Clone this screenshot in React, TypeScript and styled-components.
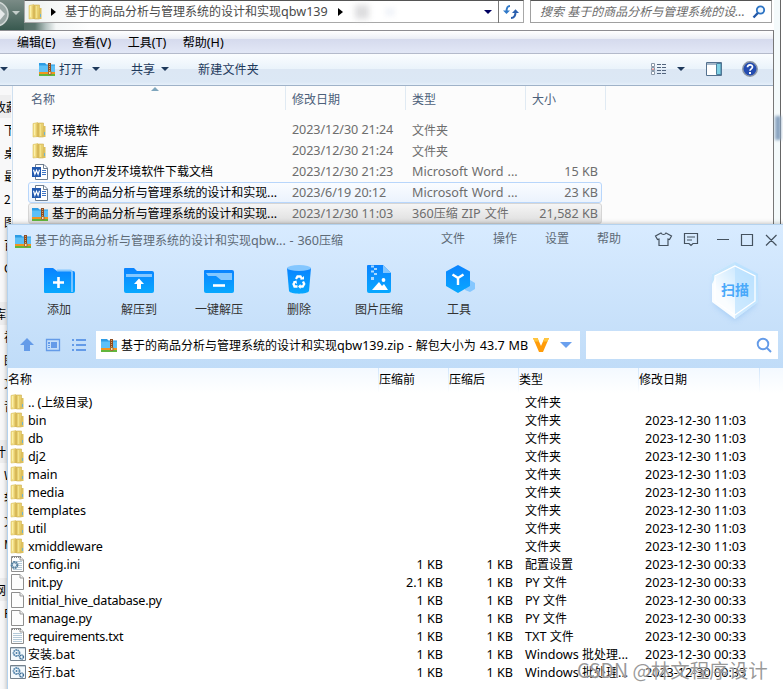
import React from "react";
import styled, { createGlobalStyle } from "styled-components";

const Global = createGlobalStyle`
  * { box-sizing: border-box; }
  body { margin: 0; overflow: hidden; background: #fff; }
`;

const Desktop = styled.div`
  position: relative;
  width: 783px;
  height: 689px;
  overflow: hidden;
  background: #fff;
  color: #000;
  font: 12px/16px "Noto Sans CJK SC", "Noto Sans", sans-serif;
  white-space: nowrap;
`;

const Latin = styled.span`
  font-family: "Noto Sans", sans-serif;
  font-size: 1.05em;
`;
const Run = styled.span<{ $track?: number; $words?: number }>`
  display: inline-block;
  white-space: pre;
  letter-spacing: ${(p) => p.$track ?? 0}px;
  word-spacing: ${(p) => p.$words ?? 0}px;
`;

/* Mixed text: Latin runs are set slightly larger than the Chinese ones. */
const Txt = ({ s, track, words }: { s: string; track?: number; words?: number }) => (
  <Run $track={track} $words={words}>
    {s.split(/([\u2e80-\uffef]+)/).map((p, i) =>
      i % 2 ? p : p ? <Latin key={i}>{p}</Latin> : null
    )}
  </Run>
);

/* ---------- Explorer window ---------- */

const Explorer = styled.section`
  position: absolute;
  inset: 0;
  display: flex;
  flex-direction: column;
`;

const AddressBar = styled.header`
  display: flex;
  height: 30px;
  align-items: flex-start;
  background: linear-gradient(90deg, #435f57 0, #5d776f 35px, #b6c4c2 46px, #f4f7f7 56px, #fff 90px);
`;
const NavButton = styled.div`
  width: 24px;
  height: 30px;
  overflow: hidden;
  background: linear-gradient(#7a8b86, #38594f);
  svg { display: block; }
`;
const PathField = styled.div`
  display: flex;
  align-items: center;
  width: 500px;
  height: 23px;
  padding-left: 3px;
  border: 1px solid #a8a8a8;
  border-top: 1px solid #555;
  background: linear-gradient(90deg, #edf1f0 0, #fff 60px);
  color: #4a4a4a;
`;
const PathArrow = styled.i<{ $gap: number }>`
  border: 4px solid transparent;
  border-left: 5px solid #000;
  border-right: 0;
  margin: 0 9px 0 ${(p) => p.$gap}px;
`;
const Blurred = styled.div`
  display: flex;
  gap: 9px;
  margin-left: 3px;
  filter: blur(3px);
  i { width: 14px; height: 14px; background: #dcdcde; }
  i + i { width: 8px; height: 6px; margin: 4px 0 0 8px; background: #e6ebf4; }
`;
const DownArrow = styled.i<{ $c: string; $w?: number }>`
  border: ${(p) => p.$w ?? 4}px solid transparent;
  border-top-color: ${(p) => p.$c};
  border-bottom: 0;
`;
const RefreshBox = styled.div`
  display: flex;
  align-items: center;
  justify-content: center;
  width: 25px;
  height: 22px;
  border-left: 1px solid #777;
`;
const Search = styled.div`
  display: flex;
  align-items: center;
  justify-content: space-between;
  width: 242px;
  height: 23px;
  margin-left: 6px;
  padding: 0 5px 0 9px;
  border: 1px solid #a0a0a0;
  border-top-color: #555;
  color: #6b6b6b;
  font-style: italic;
  background: #fff;
`;
const Spacer = styled.div`
  flex: 1;
`;

const Frame = styled.div`
  display: flex;
  flex-direction: column;
  width: 774px;
  height: 659px;
  border-top: 1px solid #8d8d92;
  border-right: 1px solid #777;
`;
const MenuBar = styled.nav`
  display: flex;
  align-items: center;
  gap: 16.500px;
  height: 23px;
  padding: 1px 0 0 17px;
  background: linear-gradient(#fff 0, #eceff6 34%, #d5daed 36%, #e2e7f6 100%);
  border-bottom: 1px solid #b4bacb;
`;
const CommandBar = styled.div`
  display: flex;
  align-items: center;
  height: 32px;
  padding-bottom: 1px;
  background: linear-gradient(#fbfdff 0, #eaf3fb 48%, #dce7f4 50%, #dce8f5 90%, #e6f0fa 100%);
  border-bottom: 1px solid #9fb2c8;
  color: #1e395b;
`;
const Command = styled.div<{ $w: number }>`
  display: flex;
  align-items: center;
  width: ${(p) => p.$w}px;
`;
const ArrowGap = styled.span<{ $l: number; $r?: number }>`
  display: inline-flex;
  padding-left: ${(p) => p.$l}px;
  padding-right: ${(p) => p.$r ?? 0}px;
`;
const Body = styled.div`
  display: flex;
  flex: 1;
  min-height: 0;
  background: #fcfcfc;
`;
const NavPane = styled.aside`
  width: 13px;
  overflow: hidden;
  border-right: 1px solid #cfe0f0;
  padding-top: 9px;
  background: #f8f8f9;
`;
const NavItem = styled.div<{ $head?: boolean }>`
  height: 23px;
  line-height: 23px;
  width: 11px;
  overflow: hidden;
  text-indent: ${(p) => (p.$head ? -6 : 4)}px;
  background: ${(p) => (p.$head ? "#eeeeef" : "transparent")};
`;
const Files = styled.div`
  flex: 1;
`;
const FileHead = styled.div`
  display: flex;
  height: 33px;
  color: #4c607a;
`;
const FileHeadCell = styled.div<{ $w: number; $pad?: number }>`
  position: relative;
  width: ${(p) => p.$w}px;
  height: 24px;
  line-height: 26px;
  padding-left: ${(p) => p.$pad ?? 6}px;
  border-right: 1px solid #e0eaf3;
`;
const SortMark = styled.span`
  position: absolute;
  left: 138px;
  top: 1px;
  border: 4px solid transparent;
  border-top: 0;
  border-bottom-color: #7fa6bd;
`;
const FileRow = styled.div<{ $state?: "hover" | "selected" }>`
  display: flex;
  align-items: center;
  width: 574px;
  height: 21px;
  margin-left: 15px;
  padding: 0 0 0 3px;
  color: #6d6d6d;
  border: 1px solid
    ${(p) => (p.$state === "hover" ? "#b8d6fb" : p.$state ? "#d5d5d5" : "transparent")};
  border-radius: 3px;
  background: ${(p) =>
    p.$state === "hover"
      ? "linear-gradient(#fafcff, #ebf3fd)"
      : p.$state
      ? "linear-gradient(#f5f5f5, #dedede)"
      : "transparent"};
`;
const Cell = styled.span<{ $w: number; $right?: boolean; $dark?: boolean; $pad?: number }>`
  flex: none;
  width: ${(p) => p.$w}px;
  padding-left: ${(p) => p.$pad ?? 0}px;
  text-align: ${(p) => (p.$right ? "right" : "left")};
  color: ${(p) => (p.$dark ? "#000" : "inherit")};
`;
const IconSlot = styled.span<{ $w: number }>`
  display: flex;
  flex: none;
  width: ${(p) => p.$w}px;
`;
const ScreenEdge = styled.div`
  position: absolute;
  right: 0;
  top: 0;
  width: 9px;
  height: 226px;
  background: linear-gradient(90deg, #f4fafb 0 6px, #666 6px 7px, #fff 7px);
`;
const EdgeGlow = styled.i`
  position: absolute;
  right: 2px;
  top: 116px;
  width: 6px;
  height: 24px;
  background: #8aa4c0;
  filter: blur(1.5px);
`;

/* ---------- Archive window ---------- */

const Archive = styled.section`
  position: absolute;
  left: 7px;
  top: 224px;
  width: 790px;
  height: 480px;
  display: flex;
  flex-direction: column;
  border: 1px solid #b4d2ee;
  background: #fff;
  box-shadow: 0 0 5px rgba(0, 0, 0, 0.3);
`;
const Chrome = styled.div`
  height: 143px;
  background: linear-gradient(#d8ebff, #c0dcf8);
`;
const TitleBar = styled.div`
  display: flex;
  height: 31px;
  align-items: center;
  padding-left: 7px;
  color: #5e6a76;
`;
const Title = styled.div`
  width: 406px;
`;
const MenuItem = styled.div`
  width: 52px;
  padding-bottom: 5px;
`;
const WindowTools = styled.div`
  display: flex;
  margin: 0 0 3px 5px;
  svg { display: block; }
`;
const ToolRow = styled.div`
  display: flex;
  height: 75px;
  padding-left: 11px;
`;
const Tool = styled.div`
  display: flex;
  flex-direction: column;
  align-items: center;
  width: 80px;
  padding-top: 7px;
  gap: 5px;
  color: #333;
`;
const ScanBadge = styled.div`
  margin: 3px 0 0 209px;
`;
const LocationRow = styled.div`
  display: flex;
  height: 28px;
  align-items: stretch;
`;
const SmallTools = styled.div`
  display: flex;
  align-items: center;
  width: 88px;
  padding-left: 12px;
`;
const Location = styled.div`
  display: flex;
  align-items: center;
  width: 484px;
  padding-left: 5px;
  background: #fff;
`;
const Find = styled.div`
  display: flex;
  align-items: center;
  justify-content: flex-end;
  width: 192px;
  margin-left: 6px;
  padding-right: 6px;
  background: #fff;
`;
const ListHead = styled.div`
  display: flex;
  height: 25px;
  background: linear-gradient(#f3f9ff, #fff);
`;
const ListHeadCell = styled.div<{ $w: number }>`
  width: ${(p) => p.$w}px;
  height: 24px;
  line-height: 22px;
  border-right: 1px solid;
  border-image: linear-gradient(#cfe4fa, #fff) 1;
`;
const Entry = styled.div`
  display: flex;
  align-items: center;
  height: 18px;
  padding-left: 2px;
`;
const Watermark = styled.div`
  position: absolute;
  left: 577px;
  top: 657px;
  font-size: 19.500px;
  line-height: 26px;
  color: rgba(120, 120, 120, 0.75);
  text-shadow: 0 0 1px #fff;
`;

/* ---------- Icons ---------- */

const ZipIcon = () => (
  <svg width="17" height="16" viewBox="0 0 17 16">
    <path d="M0 2h6l1.500 1.500H16V12H0z" fill="#2d9ce4" />
    <path d="M0 4.500h16V11H0z" fill="#5cc0f7" />
    <path d="M0 11h16v2H0z" fill="#f3941e" />
    <path d="M0 13h16v2H0z" fill="#62b63c" />
    <path d="M9 2h3v9H9z" fill="#8c4c22" />
    <path d="M10.500 3v7" stroke="#d9a468" strokeDasharray="1 1" />
    <path d="M9.500 10.500h2.500v3H9.500z" fill="#fbe2ae" stroke="#a06a35" />
  </svg>
);
const FolderIcon = () => (
  <svg width="15" height="16" viewBox="0 0 15 16">
    <path d="M1 1.500L6 .5v14l-5 .5z" fill="#f3df86" stroke="#d9bf62" strokeWidth=".6" />
    <path d="M4.500 1.500L7 1v14H4.500z" fill="#d9ba59" />
    <path d="M6.500 1H11.500v14H6.500z" fill="#e8d070" stroke="#cfae50" strokeWidth=".6" />
    <path d="M11 4h2.500v11H10z" fill="#dcbf5d" />
    <path d="M12.500 10v3" stroke="#6fb3cf" />
    <path d="M2.500 2v11" stroke="#fbf0aa" />
    <path d="M8.500 2v12" stroke="#f3e28c" />
  </svg>
);
const WordIcon = () => (
  <svg width="16" height="16" viewBox="0 0 16 16">
    <path d="M3.500.5h8.500l3.500 3.500v11.500h-12z" fill="#fff" stroke="#6f7e90" />
    <path d="M11.500.5v4h4" fill="none" stroke="#6f7e90" />
    <path d="M10 6.500h4M10 8.500h4M10 10.500h4" stroke="#3c72c2" />
    <path d="M0 3h9v10H0z" fill="#2158ae" />
    <path d="M1.500 5.800l1.400 4.500 1.600-4 1.600 4 1.400-4.500" fill="none" stroke="#fff" strokeWidth="1.200" />
  </svg>
);
const PageIcon = ({ kind }: { kind: "page" | "text" | "ini" }) => (
  <svg width="15" height="16" viewBox="0 0 15 16">
    <path d="M1.500.5h8.500l3.500 3.500v11.500H1.500z" fill="#fdfdfd" stroke="#8e8e8e" />
    <path d="M10 .5v3.500h3.500" fill="#eee" stroke="#999" />
    {kind !== "page" && (
      <g>
        <path d="M3 5.500h9M3 7.500h9M3 9.500h9M3 11.500h9M3 13.500h9" stroke="#b4c9d8" />
        <path d="M2 1h9" stroke="#888" strokeWidth="2" strokeDasharray="1 1" />
      </g>
    )}
    {kind === "ini" && (
      <circle cx="4.500" cy="9" r="2.800" fill="#e6f0f8" stroke="#57819f" strokeWidth="2.200" strokeDasharray="1.800 .5" />
    )}
  </svg>
);
const BatIcon = () => (
  <svg width="16" height="14" viewBox="0 0 16 14">
    <path d="M.5.5h15v13H.5z" fill="#f3f9fd" stroke="#73808c" />
    <path d="M1 1.500h14" stroke="#c4d0da" />
    <circle cx="6.500" cy="6" r="3" fill="none" stroke="#5686ad" strokeWidth="1.800" strokeDasharray="1.600 .5" />
    <circle cx="6.500" cy="6" r="1" fill="#477ca5" />
    <circle cx="11.500" cy="10" r="1.900" fill="none" stroke="#3c6d96" strokeWidth="1.500" strokeDasharray="1.200 .4" />
  </svg>
);
const BlueFill = () => (
  <defs>
    <linearGradient id="blue" x1="0" y1="0" x2="0" y2="1">
      <stop offset="0" stopColor="#0a83ff" />
      <stop offset="1" stopColor="#08a8ff" />
    </linearGradient>
  </defs>
);
const ToolIcon = ({ kind }: { kind: string }) => (
  <svg width="34" height="33" viewBox="0 0 34 33">
    <BlueFill />
    {kind === "add" && (
      <g>
        <path d="M2 6a1 1 0 0 1 1-1h8l4 3h16a2 2 0 0 1 2 2v18a2 2 0 0 1-2 2H3a1 1 0 0 1-1-1z" fill="url(#blue)" />
        <path d="M15 7.500h13a2 2 0 0 1 2 2V29" fill="none" stroke="#84c7ff" strokeWidth="1.800" />
        <path d="M16.500 14v11M11 19.500h11" stroke="#fff" strokeWidth="2.600" />
      </g>
    )}
    {kind === "extract" && (
      <g>
        <path d="M2 6a1 1 0 0 1 1-1h9l3 3h15a2 2 0 0 1 2 2v18a2 2 0 0 1-2 2H4a2 2 0 0 1-2-2z" fill="url(#blue)" />
        <path d="M4 11h26v3H4z" fill="#84c7ff" />
        <path d="M17 15.500l5 5.500h-3v5h-4v-5h-3z" fill="#fff" />
      </g>
    )}
    {kind === "one" && (
      <g>
        <path d="M2 8a1 1 0 0 1 1-1h27a2 2 0 0 1 2 2v19a2 2 0 0 1-2 2H4a2 2 0 0 1-2-2z" fill="url(#blue)" />
        <path d="M4 10h26v7H19l-5-4H6z" fill="#84c7ff" />
        <path d="M11 22.500h12" stroke="#fff" strokeWidth="2.600" />
      </g>
    )}
    {kind === "delete" && (
      <g>
        <path d="M5 5l2 23c1 3.500 19 3.500 20 0l2-23z" fill="url(#blue)" />
        <ellipse cx="17" cy="5" rx="12" ry="3" fill="#84c7ff" />
        <g fill="none" stroke="#fff" strokeWidth="2.300">
          <path d="M14 16l1.500-2.500h3L20 16M21 18.500l1.200 2.500-1.500 2.500H18M15.500 23.500h-3L11.500 21l1.500-2.500" />
        </g>
        <path d="M18 16.500h4V13zM18.500 21v5l-2.500-2.500zM11 18.500l3.500-1 .5 3.500z" fill="#fff" />
      </g>
    )}
    {kind === "image" && (
      <g>
        <path d="M5 3a1 1 0 0 1 1-1h15l8 8v18a2 2 0 0 1-2 2H7a2 2 0 0 1-2-2z" fill="url(#blue)" />
        <path d="M21 2l8 8h-8z" fill="#84c7ff" />
        <path d="M9 3.500h3M12 6h3M9 8.500h3M12 11h3" stroke="#a8d9ff" strokeWidth="2" />
        <path d="M9 14h3v3H9z" fill="#a8d9ff" />
        <path d="M10 27l7-8 3 4 2-2 4 6z" fill="#fff" />
        <circle cx="21.500" cy="17" r="1.900" fill="#fff" />
      </g>
    )}
    {kind === "tools" && (
      <g>
        <path d="M24 20l4-3 5 3v6l-5 3-5-2z" fill="#84c7ff" />
        <path d="M16 2l12 6.500v14.500L16 30 4 23V8.500z" fill="url(#blue)" />
        <path d="M16 22v-7l-5.500-3.500M16 15l5.500-3.500" fill="none" stroke="#fff" strokeWidth="2.400" />
      </g>
    )}
  </svg>
);
const Badge = () => (
  <svg width="54" height="66" viewBox="0 0 54 66">
    <defs>
      <linearGradient id="badge" x1="0" y1="1" x2="1" y2="0">
        <stop offset=".3" stopColor="#fafdff" />
        <stop offset="1" stopColor="#aedcff" />
      </linearGradient>
      <filter id="soft" x="-30%" y="-30%" width="160%" height="160%">
        <feGaussianBlur stdDeviation="3" />
      </filter>
    </defs>
    <path d="M27 9l20 11v26L27 61 7 46V20z" fill="#86baf0" opacity=".6" filter="url(#soft)" />
    <path d="M27 3l23 12v28L27 60 4 43V15z" fill="url(#badge)" />
    <path d="M27 3l23 12v28L27 60z" fill="#b9e0ff" opacity=".65" />
    <path d="M27 3L4 15v10l4-8L27 7z" fill="#c4e5fc" />
    <path d="M27 7l20 10v25L27 56 7 42V17z" fill="none" stroke="#fff" strokeWidth="1.300" />
    <text x="27" y="36" textAnchor="middle" fontSize="14" fontWeight="700" fill="#49a9fa" fontFamily="Noto Sans CJK SC">扫描</text>
  </svg>
);

/* ---------- Data ---------- */

const navItems = ["收藏", "下", "桌", "最", "2", "图", "百", "C", "", "库", "视", "图", "文", "音", "", "计", "W", "软", "文", "M", "", "网", "P"];
const navHeads = ["收藏", "库", "计", "网"];

const files: [string, string, string, string, string][] = [
  ["folder", "环境软件", "2023/12/30 21:24", "文件夹", ""],
  ["folder", "数据库", "2023/12/30 21:24", "文件夹", ""],
  ["word", "python开发环境软件下载文档", "2023/12/30 21:23", "Microsoft Word ...", "15 KB"],
  ["word", "基于的商品分析与管理系统的设计和实现...", "2023/6/19 20:12", "Microsoft Word ...", "23 KB"],
  ["zip", "基于的商品分析与管理系统的设计和实现...", "2023/12/30 11:03", "360压缩 ZIP 文件", "21,582 KB"],
];

const t1 = "2023-12-30 11:03";
const t2 = "2023-12-30 00:33";
const entries: [string, string, string, string, string, string][] = [
  ["folder", ".. (上级目录)", "", "", "文件夹", ""],
  ...["bin", "db", "dj2", "main", "media", "templates", "util", "xmiddleware"].map(
    (n) => ["folder", n, "", "", "文件夹", t1] as [string, string, string, string, string, string]
  ),
  ["ini", "config.ini", "1 KB", "1 KB", "配置设置", t2],
  ["page", "init.py", "2.1 KB", "1 KB", "PY 文件", t2],
  ["page", "initial_hive_database.py", "1 KB", "1 KB", "PY 文件", t2],
  ["page", "manage.py", "1 KB", "1 KB", "PY 文件", t2],
  ["text", "requirements.txt", "1 KB", "1 KB", "TXT 文件", t2],
  ["bat", "安装.bat", "1 KB", "1 KB", "Windows 批处理...", t2],
  ["bat", "运行.bat", "1 KB", "1 KB", "Windows 批处理...", t2],
];

const tools: [string, string][] = [
  ["add", "添加"],
  ["extract", "解压到"],
  ["one", "一键解压"],
  ["delete", "删除"],
  ["image", "图片压缩"],
  ["tools", "工具"],
];

const RowIcon = ({ kind }: { kind: string }) => {
  if (kind === "folder") return <FolderIcon />;
  if (kind === "word") return <WordIcon />;
  if (kind === "zip") return <ZipIcon />;
  if (kind === "bat") return <BatIcon />;
  return <PageIcon kind={kind as "page" | "text" | "ini"} />;
};

export default function App() {
  return (
    <Desktop>
      <Global />
      <Explorer>
        <AddressBar>
          <NavButton>
            <svg width="24" height="30" viewBox="0 0 24 30">
              <circle cx="-4" cy="14" r="12" fill="#9aa7a5" stroke="#d0d7d5" strokeWidth="1.500" />
              <path d="M0 9l5 5-5 6z" fill="#e6eaea" />
              <path d="M12 11h8l-4 4z" fill="#c4cdca" />
            </svg>
          </NavButton>
          <PathField>
            <FolderIcon />
            <PathArrow $gap={8} />
            <Txt s="基于的商品分析与管理系统的设计和实现qbw139" />
            <PathArrow $gap={10} />
            <Blurred><i /><i /></Blurred>
            <Spacer />
            <DownArrow $c="#000060" />
            <ArrowGap $l={6} />
            <RefreshBox>
              <svg width="16" height="14" viewBox="0 0 16 14">
                <path d="M7 1C4 1 3.500 3 3.500 7" fill="none" stroke="#2f78c8" strokeWidth="2" />
                <path d="M0 5.500h7L3.500 9z" fill="#2f78c8" />
                <path d="M8 13c3.500 0 4.500-2 4.500-6" fill="none" stroke="#2a5fae" strokeWidth="2" />
                <path d="M9 8h7l-3.500-3.800z" fill="#2a5fae" />
              </svg>
            </RefreshBox>
          </PathField>
          <Search>
            <Txt s="搜索 基于的商品分析与管理系统的设..." />
            <svg width="14" height="14" viewBox="0 0 14 14">
              <circle cx="8.500" cy="5" r="3.700" fill="#eef6ff" stroke="#2d74c4" strokeWidth="1.800" />
              <path d="M5.800 8L1.500 12.500" stroke="#2459a8" strokeWidth="2.400" />
            </svg>
          </Search>
        </AddressBar>
        <Frame>
          <MenuBar>
            {["编辑(E)", "查看(V)", "工具(T)", "帮助(H)"].map((m) => <Txt key={m} s={m} />)}
          </MenuBar>
          <CommandBar>
            <Command $w={39}><DownArrow $c="#1e395b" /></Command>
            <Command $w={92}>
              <IconSlot $w={20}><ZipIcon /></IconSlot>
              <Txt s="打开" />
              <ArrowGap $l={9}><DownArrow $c="#1e395b" /></ArrowGap>
            </Command>
            <Command $w={67}>
              <Txt s="共享" />
              <ArrowGap $l={6}><DownArrow $c="#1e395b" /></ArrowGap>
            </Command>
            <Txt s="新建文件夹" track={0.2} />
            <Spacer />
            <svg width="16" height="13" viewBox="0 0 16 13">
              <path d="M.5.5h3v3h-3zM.5 4.500h3v3h-3zM.5 8.500h3v3h-3z" fill="#fff" stroke="#8b98a8" />
              <path d="M2 5.500v1.500" stroke="#c33" />
              <path d="M6 1.500h4M11 1.500h4M6 4.500h4M11 4.500h4M6 7.500h4M11 7.500h4M6 10.500h4M11 10.500h4" stroke="#52647d" />
            </svg>
            <ArrowGap $l={10} $r={21}><DownArrow $c="#1e395b" /></ArrowGap>
            <svg width="17" height="14" viewBox="0 0 17 14">
              <path d="M.5.5h15v13H.5z" fill="#fff" stroke="#54718f" />
              <path d="M1 2h9" stroke="#a5b7ca" strokeWidth="2" />
              <path d="M10.500 1.500h4.500v11h-4.500z" fill="#7fd0e4" stroke="#4b7f9d" />
            </svg>
            <ArrowGap $l={19} />
            <svg width="16" height="16" viewBox="0 0 16 16">
              <circle cx="8" cy="8" r="7.200" fill="#234bb0" stroke="#8c96a5" strokeWidth="1.500" />
              <path d="M5.500 6.300C5.500 3 10.500 3 10.500 6c0 2-2.500 1.800-2.500 3.800" fill="none" stroke="#fff" strokeWidth="1.700" />
              <path d="M7 11h2v2H7z" fill="#fff" />
            </svg>
            <ArrowGap $l={15} />
          </CommandBar>
          <Body>
            <NavPane>
              {navItems.map((n, i) => <NavItem key={i} $head={navHeads.includes(n)}>{n}</NavItem>)}
            </NavPane>
            <Files>
              <FileHead>
                <FileHeadCell $w={273} $pad={18}>名称<SortMark /></FileHeadCell>
                <FileHeadCell $w={120}>修改日期</FileHeadCell>
                <FileHeadCell $w={120}>类型</FileHeadCell>
                <FileHeadCell $w={80}>大小</FileHeadCell>
              </FileHead>
              {files.map(([icon, name, date, type, size], i) => (
                <FileRow key={i} $state={i === 3 ? "hover" : i === 4 ? "selected" : undefined}>
                  <IconSlot $w={20}><RowIcon kind={icon} /></IconSlot>
                  <Cell $w={240} $dark><Txt s={name} track={-0.05} /></Cell>
                  <Cell $w={120}><Txt s={date} track={-0.08} /></Cell>
                  <Cell $w={116}><Txt s={type} words={0.7} /></Cell>
                  <Cell $w={70} $right><Txt s={size} /></Cell>
                </FileRow>
              ))}
            </Files>
          </Body>
        </Frame>
        <ScreenEdge />
        <EdgeGlow />
      </Explorer>

      <Archive>
        <Chrome>
          <TitleBar>
            <IconSlot $w={20}><ZipIcon /></IconSlot>
            <Title><Txt s="基于的商品分析与管理系统的设计和实现qbw... - 360压缩" words={0.5} /></Title>
            {["文件", "操作", "设置", "帮助"].map((m) => <MenuItem key={m}>{m}</MenuItem>)}
            <WindowTools>
              <svg width="128" height="16" viewBox="0 0 128 16" fill="none" stroke="#45525f" strokeWidth="1.200">
                <path d="M7 2L1.500 5l2 3.500L5 8v6.500h9V8l1.500.5 2-3.500L12 2c-1 2-4 2-5 0z" />
                <path d="M30.500 2.500h13v10H39l-2 2-2-2h-4.500zM33 6h8M33 9h5" />
                <path d="M63 8.500h12M87.500 3.500h11v11h-11zM112 4l10.500 10.500M122.500 4L112 14.500" />
              </svg>
            </WindowTools>
          </TitleBar>
          <ToolRow>
            {tools.map(([kind, label]) => (
              <Tool key={kind}><ToolIcon kind={kind} />{label}</Tool>
            ))}
            <ScanBadge><Badge /></ScanBadge>
          </ToolRow>
          <LocationRow>
            <SmallTools>
              <svg width="68" height="14" viewBox="0 0 68 14">
                <path d="M7 0l7 7h-4v6H4V7H0z" fill="#649be8" />
                <path d="M26.500 1.500h13v11h-13z" fill="none" stroke="#649be8" strokeWidth="1.300" />
                <path d="M31 4h6v6h-6zM28 4h2v2h-2zM28 7h2v1h-2zM28 9h2v1h-2z" fill="#649be8" />
                <path d="M52 2h2m2 0h10M52 7h2m2 0h10M52 12h2m2 0h10" stroke="#649be8" strokeWidth="2" />
              </svg>
            </SmallTools>
            <Location>
              <IconSlot $w={20}><ZipIcon /></IconSlot>
              <Txt s="基于的商品分析与管理系统的设计和实现qbw139.zip - 解包大小为 43.7 MB" words={0.6} />
              <ArrowGap $l={5} $r={11}>
                <svg width="16" height="14" viewBox="0 0 16 14">
                  <path d="M0 0h4.500L8 8l3.500-8H16l-6 14H6z" fill="#ff9c0a" />
                  <path d="M0 0h4.500l1.500 3.500H1.500zM11.500 0H16l-1.500 3.500H10z" fill="#ffc53c" />
                </svg>
              </ArrowGap>
              <DownArrow $c="#6ba0ee" $w={6} />
            </Location>
            <Find>
              <svg width="16" height="16" viewBox="0 0 16 16" fill="none" stroke="#649be8" strokeWidth="1.900">
                <circle cx="7" cy="7" r="5.300" />
                <path d="M11 11l4 4" />
              </svg>
            </Find>
          </LocationRow>
        </Chrome>
        <ListHead>
          <ListHeadCell $w={371}>名称</ListHeadCell>
          <ListHeadCell $w={70}>压缩前</ListHeadCell>
          <ListHeadCell $w={70}>压缩后</ListHeadCell>
          <ListHeadCell $w={120}>类型</ListHeadCell>
          <ListHeadCell $w={121}>修改日期</ListHeadCell>
        </ListHead>
        {entries.map(([icon, name, before, after, type, date], i) => (
          <Entry key={i}>
            <IconSlot $w={18}><RowIcon kind={icon} /></IconSlot>
            <Cell $w={345}><Txt s={name} track={icon === "folder" ? -0.15 : icon === "bat" ? 0 : -0.25} /></Cell>
            <Cell $w={70} $right><Txt s={before} /></Cell>
            <Cell $w={70} $right><Txt s={after} /></Cell>
            <Cell $w={132} $pad={12}><Txt s={type} /></Cell>
            <Cell $w={130}><Txt s={date} /></Cell>
          </Entry>
        ))}
      </Archive>
      <Watermark>CSDN @林文程序设计</Watermark>
    </Desktop>
  );
}
